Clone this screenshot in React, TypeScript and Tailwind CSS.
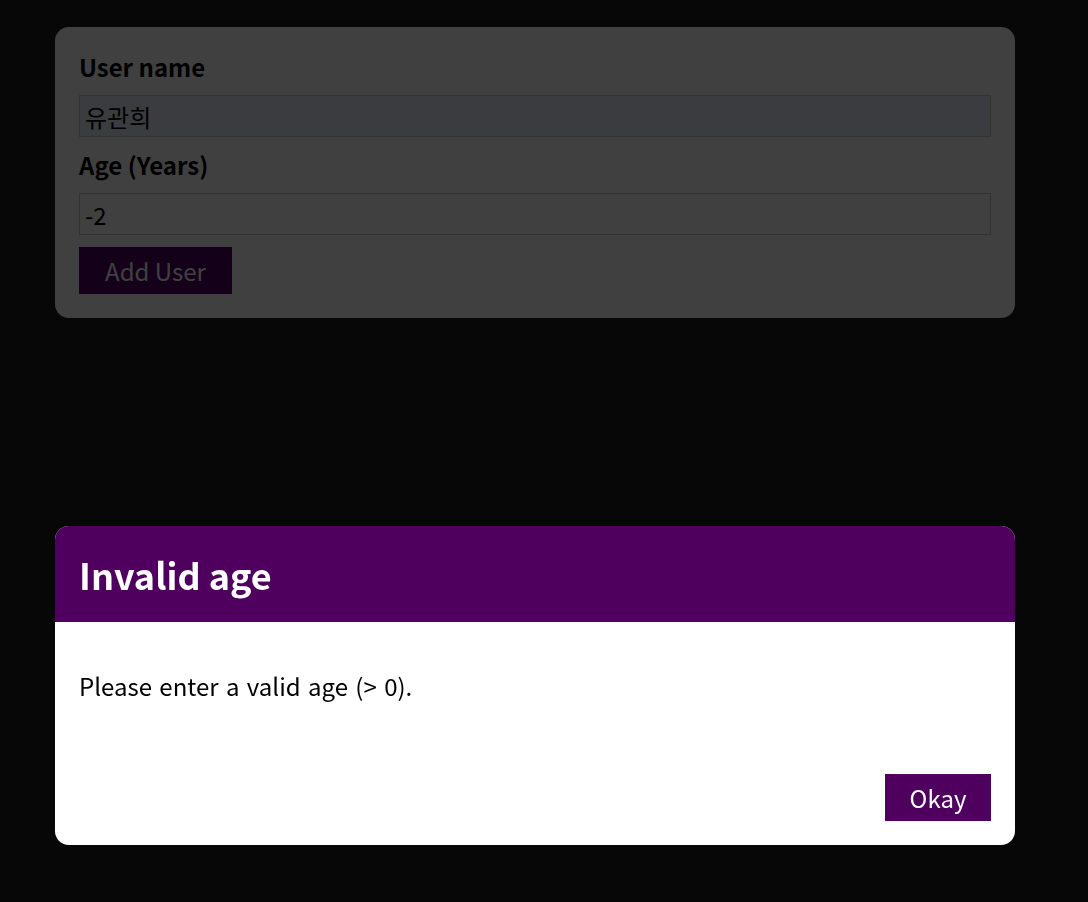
export default function App() {
  const font = { fontFamily: '"Noto Sans CJK KR", "Noto Sans", sans-serif' };
  return (
    <div className="relative min-h-[902px] bg-[#1f1f1f] pt-[27px]" style={font}>
      {/* form card */}
      <div className="ml-[55px] w-[960px] rounded-[14px] bg-white p-6">
        <label className="mb-3 block text-[24px] font-bold leading-[32px] text-black">User name</label>
        <input
          className="mb-3 block h-[42px] w-full border border-[#ccc] bg-[#e8f0fe] px-[5px] text-[24px] text-black outline-none"
          defaultValue="유관희"
        />
        <label className="mb-3 block text-[24px] font-bold leading-[32px] text-black">Age (Years)</label>
        <input
          className="mb-3 block h-[42px] w-full border border-[#ccc] bg-white px-[5px] text-[24px] text-black outline-none"
          defaultValue="-2"
        />
        <button className="h-[47px] w-[153px] bg-[#4f005f] text-[24px] text-white">Add User</button>
      </div>

      {/* backdrop */}
      <div className="fixed inset-0 bg-black/75" />

      {/* modal */}
      <div className="fixed left-[55px] top-[526px] w-[960px] overflow-hidden rounded-[14px] bg-white">
        <header className="bg-[#4f005f] px-6 py-6">
          <h2 className="text-[36px] font-bold leading-[48px] text-white">Invalid age</h2>
        </header>
        <div className="p-6">
          <p className="my-6 text-[24px] leading-[32px] text-black [word-spacing:2px]">Please enter a valid age (&gt; 0).</p>
        </div>
        <footer className="flex justify-end p-6">
          <button className="h-[47px] w-[106px] bg-[#4f005f] text-[24px] text-white">Okay</button>
        </footer>
      </div>
    </div>
  );
}
